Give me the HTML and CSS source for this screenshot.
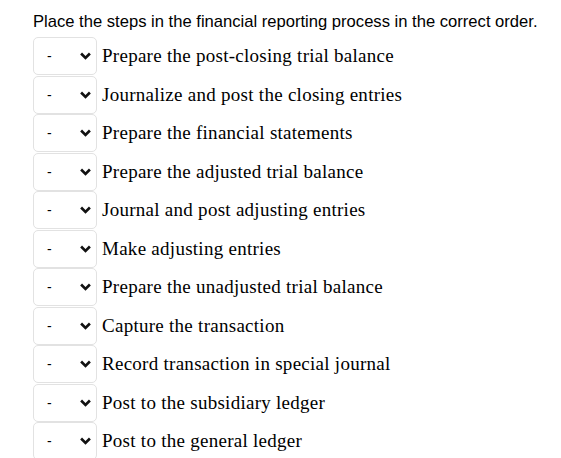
FILE: index.html
```html
<!DOCTYPE html>
<html lang="en">
<head>
    <meta charset="UTF-8">
    <meta name="viewport" content="width=device-width, initial-scale=1.0">
    <title>Financial Reporting Order</title>
    <link rel="stylesheet" href="styles.css">
</head>
<body>
    <div class="question">
        <p class="prompt">Place the steps in the financial reporting process in the correct order.</p>
        <ul class="steps">
            <li class="step"><span class="pick"><span class="dash">-</span><svg class="chev" viewBox="0 0 10 7"><path d="M1 1.2 L5 5.2 L9 1.2"/></svg></span><span class="label">Prepare the post-closing trial balance</span></li>
            <li class="step"><span class="pick"><span class="dash">-</span><svg class="chev" viewBox="0 0 10 7"><path d="M1 1.2 L5 5.2 L9 1.2"/></svg></span><span class="label">Journalize and post the closing entries</span></li>
            <li class="step"><span class="pick"><span class="dash">-</span><svg class="chev" viewBox="0 0 10 7"><path d="M1 1.2 L5 5.2 L9 1.2"/></svg></span><span class="label">Prepare the financial statements</span></li>
            <li class="step"><span class="pick"><span class="dash">-</span><svg class="chev" viewBox="0 0 10 7"><path d="M1 1.2 L5 5.2 L9 1.2"/></svg></span><span class="label">Prepare the adjusted trial balance</span></li>
            <li class="step"><span class="pick"><span class="dash">-</span><svg class="chev" viewBox="0 0 10 7"><path d="M1 1.2 L5 5.2 L9 1.2"/></svg></span><span class="label">Journal and post adjusting entries</span></li>
            <li class="step"><span class="pick"><span class="dash">-</span><svg class="chev" viewBox="0 0 10 7"><path d="M1 1.2 L5 5.2 L9 1.2"/></svg></span><span class="label">Make adjusting entries</span></li>
            <li class="step"><span class="pick"><span class="dash">-</span><svg class="chev" viewBox="0 0 10 7"><path d="M1 1.2 L5 5.2 L9 1.2"/></svg></span><span class="label">Prepare the unadjusted trial balance</span></li>
            <li class="step"><span class="pick"><span class="dash">-</span><svg class="chev" viewBox="0 0 10 7"><path d="M1 1.2 L5 5.2 L9 1.2"/></svg></span><span class="label">Capture the transaction</span></li>
            <li class="step"><span class="pick"><span class="dash">-</span><svg class="chev" viewBox="0 0 10 7"><path d="M1 1.2 L5 5.2 L9 1.2"/></svg></span><span class="label">Record transaction in special journal</span></li>
            <li class="step"><span class="pick"><span class="dash">-</span><svg class="chev" viewBox="0 0 10 7"><path d="M1 1.2 L5 5.2 L9 1.2"/></svg></span><span class="label">Post to the subsidiary ledger</span></li>
            <li class="step"><span class="pick"><span class="dash">-</span><svg class="chev" viewBox="0 0 10 7"><path d="M1 1.2 L5 5.2 L9 1.2"/></svg></span><span class="label">Post to the general ledger</span></li>
        </ul>
    </div>
</body>
</html>
```

FILE: styles.css
```css
body, html {
    margin: 0;
    background: #fff;
    color: #000;
}

.question {
    padding: 12px 0 0 33px;
}

.prompt {
    margin: 0 0 5px;
    font-family: "Liberation Sans", Arial, sans-serif;
    font-size: 16.6px;
    line-height: 20px;
}

.steps {
    list-style-type: none;
    padding: 0;
    margin: 0;
    display: flex;
    flex-direction: column;
    gap: 0.5px;
}

.step {
    display: flex;
    align-items: center;
    height: 38px;
}

.pick {
    box-sizing: border-box;
    width: 64px;
    height: 38px;
    border: 1px solid #e2e2e2;
    border-radius: 5px;
    display: flex;
    align-items: center;
    padding-left: 13px;
    font-family: "Liberation Sans", Arial, sans-serif;
    font-size: 14px;
}

.dash {
    width: 33px;
}

.chev {
    width: 11px;
    height: 8px;
    fill: none;
    stroke: #111;
    stroke-width: 2.4;
}

.label {
    margin-left: 5px;
    font-family: "Liberation Serif", "Times New Roman", serif;
    font-size: 19px;
    letter-spacing: 0.27px;
}
```
